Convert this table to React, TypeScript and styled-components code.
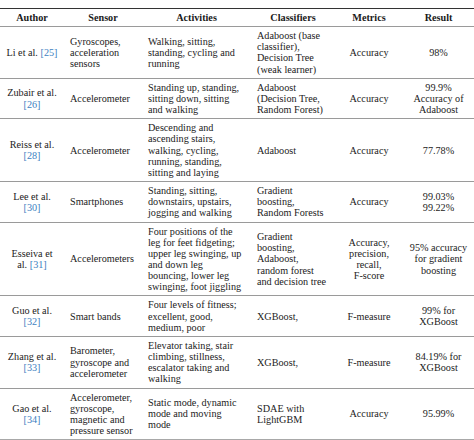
import React from "react";
import styled, { createGlobalStyle } from "styled-components";

const GlobalStyle = createGlobalStyle`
  html, body {
    margin: 0;
    padding: 0;
    background: #ffffff;
  }
  body {
    font-family: "Liberation Serif", "DejaVu Serif", serif;
    color: #1c1c1c;
  }
`;

interface Row {
  author: string[];
  ref: number;
  sensor: string[];
  activities: string[];
  classifiers: string[];
  metrics: string[];
  result: string[];
}

const rows: Row[] = [
  {
    author: ["Li et al. "],
    ref: 25,
    sensor: ["Gyroscopes,", "acceleration", "sensors"],
    activities: ["Walking, sitting,", "standing, cycling and", "running"],
    classifiers: ["Adaboost (base", "classifier),", "Decision Tree", "(weak learner)"],
    metrics: ["Accuracy"],
    result: ["98%"],
  },
  {
    author: ["Zubair et al.", ""],
    ref: 26,
    sensor: ["Accelerometer"],
    activities: ["Standing up, standing,", "sitting down, sitting", "and walking"],
    classifiers: ["Adaboost", "(Decision Tree,", "Random Forest)"],
    metrics: ["Accuracy"],
    result: ["99.9%", "Accuracy of", "Adaboost"],
  },
  {
    author: ["Reiss et al.", ""],
    ref: 28,
    sensor: ["Accelerometer"],
    activities: [
      "Descending and",
      "ascending stairs,",
      "walking, cycling,",
      "running, standing,",
      "sitting and laying",
    ],
    classifiers: ["Adaboost"],
    metrics: ["Accuracy"],
    result: ["77.78%"],
  },
  {
    author: ["Lee et al.", ""],
    ref: 30,
    sensor: ["Smartphones"],
    activities: ["Standing, sitting,", "downstairs, upstairs,", "jogging and walking"],
    classifiers: ["Gradient", "boosting,", "Random Forests"],
    metrics: ["Accuracy"],
    result: ["99.03%", "99.22%"],
  },
  {
    author: ["Esseiva et", "al. "],
    ref: 31,
    sensor: ["Accelerometers"],
    activities: [
      "Four positions of the",
      "leg for feet fidgeting;",
      "upper leg swinging, up",
      "and down leg",
      "bouncing, lower leg",
      "swinging, foot jiggling",
    ],
    classifiers: ["Gradient", "boosting,", "Adaboost,", "random forest", "and decision tree"],
    metrics: ["Accuracy,", "precision,", "recall,", "F-score"],
    result: ["95% accuracy", "for gradient", "boosting"],
  },
  {
    author: ["Guo et al.", ""],
    ref: 32,
    sensor: ["Smart bands"],
    activities: ["Four levels of fitness;", "excellent, good,", "medium, poor"],
    classifiers: ["XGBoost,"],
    metrics: ["F-measure"],
    result: ["99% for", "XGBoost"],
  },
  {
    author: ["Zhang et al.", ""],
    ref: 33,
    sensor: ["Barometer,", "gyroscope and", "accelerometer"],
    activities: [
      "Elevator taking, stair",
      "climbing, stillness,",
      "escalator taking and",
      "walking",
    ],
    classifiers: ["XGBoost,"],
    metrics: ["F-measure"],
    result: ["84.19% for", "XGBoost"],
  },
  {
    author: ["Gao et al.", ""],
    ref: 34,
    sensor: ["Accelerometer,", "gyroscope,", "magnetic and", "pressure sensor"],
    activities: ["Static mode, dynamic", "mode and moving", "mode"],
    classifiers: ["SDAE with", "LightGBM"],
    metrics: ["Accuracy"],
    result: ["95.99%"],
  },
];

const Page = styled.div`
  padding-top: 8px;
  width: 474px;
  font-family: "Liberation Serif", "DejaVu Serif", serif;
`;

const Table = styled.table`
  width: 474px;
  table-layout: fixed;
  border-collapse: collapse;
  font-family: "Liberation Serif", "DejaVu Serif", serif;
  font-size: 10.2px;
  line-height: 11.15px;
  border-top: 1.5px solid #333;
  border-bottom: 2px solid #a8a8a8;
`;

const HeadCell = styled.th`
  font-family: "Liberation Serif", "DejaVu Serif", serif;
  font-weight: bold;
  text-align: center;
  padding: 3px 6px;
  white-space: nowrap;
  border-bottom: 1px solid #9a9a9a;
  color: #1a1a1a;
`;

const BodyRow = styled.tr`
  border-bottom: 1px solid #9a9a9a;
`;

const Cell = styled.td<{ $center?: boolean }>`
  font-family: "Liberation Serif", "DejaVu Serif", serif;
  text-align: ${(p) => (p.$center ? "center" : "left")};
  vertical-align: middle;
  padding: 3px 6px;
  white-space: nowrap;
  color: #222;
`;

const Ref = styled.span`
  color: #3d7fc1;
`;

const widths = [64, 78, 109, 84, 68, 71];
const headers = ["Author", "Sensor", "Activities", "Classifiers", "Metrics", "Result"];

const Lines: React.FC<{ lines: string[] }> = ({ lines }) => (
  <>
    {lines.map((l, i) => (
      <React.Fragment key={i}>
        {i > 0 && <br />}
        {l}
      </React.Fragment>
    ))}
  </>
);

export default function App() {
  return (
    <Page>
      <GlobalStyle />
      <Table>
        <colgroup>
          {widths.map((w, i) => (
            <col key={i} style={{ width: w }} />
          ))}
        </colgroup>
        <thead>
          <tr>
            {headers.map((h) => (
              <HeadCell key={h}>{h}</HeadCell>
            ))}
          </tr>
        </thead>
        <tbody>
          {rows.map((r) => (
            <BodyRow key={r.ref}>
              <Cell $center>
                {r.author.map((l, i) => (
                  <React.Fragment key={i}>
                    {i > 0 && <br />}
                    {l}
                    {i === r.author.length - 1 && <Ref>[{r.ref}]</Ref>}
                  </React.Fragment>
                ))}
              </Cell>
              <Cell>
                <Lines lines={r.sensor} />
              </Cell>
              <Cell>
                <Lines lines={r.activities} />
              </Cell>
              <Cell>
                <Lines lines={r.classifiers} />
              </Cell>
              <Cell $center>
                <Lines lines={r.metrics} />
              </Cell>
              <Cell $center>
                <Lines lines={r.result} />
              </Cell>
            </BodyRow>
          ))}
        </tbody>
      </Table>
    </Page>
  );
}
